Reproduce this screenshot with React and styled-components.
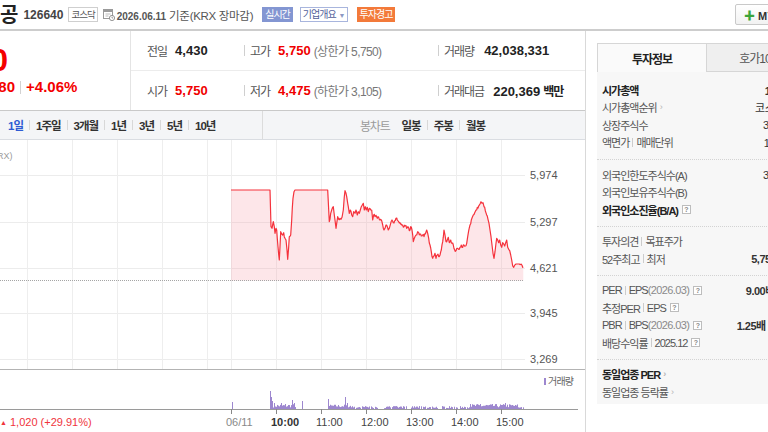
import React from "react";
import styled, { createGlobalStyle } from "styled-components";

const FONT = `"Liberation Sans", "Noto Sans CJK KR", sans-serif`;

const GlobalStyle = createGlobalStyle`
  html, body { margin: 0; padding: 0; overflow: hidden; background: #fff; }
  body { font-family: ${FONT}; color: #333; }
  * { box-sizing: border-box; }
`;

const Page = styled.div`
  width: 826px;
  height: 432px;
  display: flex;
  flex-direction: column;
`;

/* ---------- top bar ---------- */
const TopBar = styled.header`
  height: 31px;
  flex-shrink: 0;
  border-bottom: 2px solid #cdcdcd;
  display: flex;
  align-items: center;
`;
const Name = styled.h1`
  margin: 0;
  font: bold 20px ${FONT};
  color: #222;
  line-height: 1;
`;
const Code = styled.span`
  margin-left: 5px;
  font: bold 12px ${FONT};
  color: #444;
`;
const MarketTag = styled.span`
  margin-left: 5px;
  height: 15px;
  padding: 0 2px;
  border: 1px solid #cfcfcf;
  font: 9.5px/13px ${FONT};
  letter-spacing: -1px;
  color: #555;
`;
const CalIcon = styled.svg`
  margin-left: 5px;
  flex-shrink: 0;
`;
const DateText = styled.span`
  margin-left: 2px;
  font: 11.5px ${FONT};
  letter-spacing: -0.3px;
  color: #555;
  b { font-size: 10px; letter-spacing: 0; }
`;
const badgeColors = {
  live: "background:#8396d2;color:#fff;border-color:#8396d2;",
  info: "background:#fff;color:#52609a;border-color:#a8b5dd;",
  warn: "background:#f37a3a;color:#fff;border-color:#f37a3a;",
};
const Badge = styled.span`
  margin-left: ${(p) => p.$ml || 8}px;
  height: 15px;
  padding: 0 2px;
  border: 1px solid;
  font: 10px/13px ${FONT};
  letter-spacing: -1px;
  white-space: nowrap;
  ${(p) => badgeColors[p.$kind]}
  i { font-style: normal; font-size: 7px; color: #8d99c4; margin-left: 3px; }
`;
const MyButton = styled.button`
  margin-left: auto;
  margin-right: 43px;
  width: 48px;
  height: 21px;
  padding: 0 0 0 8px;
  text-align: left;
  border: 1px solid #c9c9c9;
  border-radius: 2px;
  background: linear-gradient(#ffffff, #f2f2f2);
  font: bold 11px ${FONT};
  color: #333;
  span { color: #3aa53a; margin-right: 3px; }
`;

/* ---------- body ---------- */
const Body = styled.div`
  flex: 1;
  display: flex;
  min-height: 0;
`;
const Main = styled.main`
  width: 586px;
  flex-shrink: 0;
  border-right: 1px solid #d9d9d9;
  display: flex;
  flex-direction: column;
`;
const Summary = styled.section`
  height: 80px;
  flex-shrink: 0;
  border-bottom: 1px solid #c9c9c9;
  display: flex;
`;
const PriceBlock = styled.div`
  width: 131px;
  border-right: 1px solid #e4e4e4;
  overflow: hidden;
  padding-top: 11px;
  white-space: nowrap;
`;
const Price = styled.div`
  margin-left: ${(p) => p.$shift}px;
  font: bold 32px/36px ${FONT};
  color: #f40000;
`;
const Change = styled.div`
  margin-left: ${(p) => p.$shift}px;
  display: flex;
  align-items: center;
  font: bold 15px/18px ${FONT};
  color: #f40000;
`;
const Arrow = styled.span`
  display: inline-block;
  width: 12px;
  font-size: 10px;
`;
const VBar = styled.span`
  display: inline-block;
  width: 1px;
  height: ${(p) => p.$h || 12}px;
  background: ${(p) => p.$c || "#d2d2d2"};
  margin: 0 ${(p) => p.$m ?? 5}px;
  flex-shrink: 0;
`;
const Stats = styled.div`
  flex: 1;
  display: grid;
  grid-template-columns: 113px 194px 1fr;
  grid-template-rows: 40px 1fr;
`;
const StatCell = styled.div`
  display: flex;
  align-items: center;
  padding-left: ${(p) => (p.$first ? 16 : 0)}px;
  border-bottom: ${(p) => (p.$top ? "1px solid #ececec" : "none")};
  white-space: nowrap;
`;
const StatLabel = styled.span`
  font: 12px ${FONT};
  letter-spacing: -1px;
  color: #555;
  margin-left: ${(p) => (p.$after ? 5 : 0)}px;
  margin-right: ${(p) => p.$gap || 8}px;
`;
const StatValue = styled.span`
  font: bold 13px ${FONT};
  color: ${(p) => (p.$up ? "#f00000" : "#222")};
  small { font-size: 12px; margin-left: 3px; letter-spacing: -1px; }
`;
const StatSub = styled.span`
  margin-left: 3px;
  font: 12px ${FONT};
  letter-spacing: -0.6px;
  color: #777;
`;

/* chart tabs */
const ChartTabs = styled.nav`
  height: 29px;
  flex-shrink: 0;
  background: #f4f5f7;
  border-bottom: 1px solid #dadde2;
  display: flex;
  align-items: center;
`;
const PeriodGroup = styled.div`
  width: 263px;
  height: 100%;
  border-right: 1px solid #dcdcdc;
  display: flex;
  align-items: center;
  padding-left: 8px;
`;
const PeriodTab = styled.span`
  font: bold 11.5px ${FONT};
  letter-spacing: -1px;
  color: ${(p) => (p.$active ? "#2f5bd3" : "#333")};
`;
const CandleGroup = styled.div`
  margin-left: 97px;
  display: flex;
  align-items: center;
`;
const CandleTitle = styled.span`
  font: 12px ${FONT};
  letter-spacing: -1.2px;
  color: #9a9a9a;
  margin-right: 12px;
`;

const PriceChart = styled.div`
  height: 230px;
  flex-shrink: 0;
  border-bottom: 1px solid #b3b3b3;
`;
const VolumeChart = styled.div`
  flex: 1;
  min-height: 0;
`;

/* ---------- aside ---------- */
const Aside = styled.aside`
  width: 240px;
  flex-shrink: 0;
  padding: 12px 11px 0;
`;
const Tabs = styled.div`
  display: flex;
  height: 29px;
`;
const Tab = styled.div`
  width: ${(p) => p.$w}px;
  flex-shrink: 0;
  display: flex;
  align-items: center;
  justify-content: center;
  font: ${(p) => (p.$active ? "bold" : "normal")} 12px ${FONT};
  letter-spacing: -1px;
  color: ${(p) => (p.$active ? "#222" : "#555")};
  background: ${(p) => (p.$active ? "#fafafa" : "#efefef")};
  border: 1px solid #d6d6d6;
  border-bottom: ${(p) => (p.$active ? "none" : "1px solid #d6d6d6")};
  border-left: ${(p) => (p.$active ? "1px solid #d6d6d6" : "none")};
  white-space: nowrap;
`;
const InfoBox = styled.div`
  background: #f7f7f7;
  width: 218px;
`;
const InfoGroup = styled.div`
  padding: ${(p) => p.$pt}px 0 ${(p) => p.$pb}px;
  border-top: ${(p) => (p.$first ? "none" : "1px dotted #d3d3d3")};
`;
const InfoRow = styled.div`
  height: 17.5px;
  display: flex;
  align-items: center;
  justify-content: space-between;
  padding: 0 2px 0 5px;
  white-space: nowrap;
`;
const Label = styled.span`
  display: flex;
  align-items: center;
  font: ${(p) => (p.$bold ? "bold" : "normal")} 11px ${FONT};
  letter-spacing: -1px;
  color: ${(p) => (p.$bold ? "#222" : "#555")};
`;
const Dim = styled.span`
  color: #8a8a8a;
  letter-spacing: -0.6px;
`;
const More = styled.span`
  color: #b5b5b5;
  font-size: 9px;
  margin-left: 3px;
`;
const Help = styled.span`
  display: inline-flex;
  align-items: center;
  justify-content: center;
  width: 9px;
  height: 9px;
  margin-left: 4px;
  border: 1px solid #bdbdbd;
  background: #fff;
  font: bold 7px/1 ${FONT};
  letter-spacing: 0;
  color: #888;
`;
const Value = styled.span`
  font: ${(p) => (p.$bold ? "bold" : "normal")} 11px ${FONT};
  letter-spacing: -0.5px;
  color: #333;
  margin-right: ${(p) => p.$mr || 0}px;
`;

/* ---------- chart data ---------- */
const Z = [
  [93, 90], [210, 90], [213, 200], [216, 205], [220, 185], [223, 200], [225, 220], [228, 205], [230, 210],
  [234, 260], [238, 300], [240, 260], [242, 215], [245, 222], [248, 225], [251, 218], [255, 235], [258, 240],
  [261, 270], [263, 298], [266, 260], [268, 230], [272, 225], [275, 180], [279, 115], [282, 95], [285, 90],
  [383, 90], [386, 150], [388, 185], [392, 160], [395, 150], [400, 140], [403, 165], [405, 180], [408, 205],
  [410, 190], [413, 170], [416, 178], [420, 175], [423, 178], [426, 172], [430, 150], [433, 110], [435, 92],
  [438, 100], [440, 110], [443, 130], [445, 140], [448, 160], [451, 150], [455, 165], [458, 170], [461, 155],
  [465, 160], [468, 150], [472, 165], [475, 155], [478, 160], [481, 150], [484, 140], [487, 135], [490, 130],
  [493, 150], [496, 140], [499, 150], [502, 142], [505, 155], [508, 145], [512, 150], [515, 150], [518, 180],
  [521, 165], [525, 170], [528, 166], [532, 175], [536, 172], [540, 180], [545, 182], [548, 195], [552, 210],
  [555, 205], [558, 195], [562, 200], [565, 210], [568, 205], [572, 190], [576, 180], [580, 188], [584, 182],
  [588, 175], [592, 180], [596, 185], [600, 188], [604, 192], [608, 195], [612, 200], [616, 198], [620, 205],
  [624, 200], [628, 212], [632, 200], [636, 210], [640, 245], [643, 235], [646, 228], [650, 225], [653, 215],
  [656, 218], [660, 222], [664, 228], [668, 225], [672, 230], [676, 222], [680, 210], [683, 220], [686, 235],
  [690, 255], [694, 275], [698, 295], [702, 288], [705, 280], [708, 295], [712, 285], [716, 290], [720, 285],
  [724, 270], [728, 245], [732, 210], [735, 225], [738, 245], [742, 240], [745, 232], [748, 248], [752, 240],
  [756, 250], [760, 255], [764, 270], [768, 272], [772, 265], [776, 268], [780, 262], [784, 255], [788, 262],
  [792, 255], [796, 258], [800, 250], [803, 230], [806, 212], [810, 195], [814, 180], [817, 172], [820, 165],
  [824, 158], [828, 150], [832, 142], [836, 138], [840, 132], [843, 125], [846, 130], [849, 128], [852, 140],
  [856, 152], [860, 165], [864, 178], [867, 190], [870, 210], [873, 230], [876, 255], [879, 280], [882, 295],
  [885, 275], [888, 250], [890, 235], [893, 240], [896, 248], [899, 240], [902, 255], [905, 262], [908, 248],
  [911, 252], [914, 258], [917, 248], [920, 240], [923, 262], [926, 268], [929, 272], [932, 285], [935, 300],
  [938, 318], [941, 322], [944, 315], [948, 312], [952, 312], [958, 312], [962, 313], [966, 316], [970, 322],
];

const linePoints = (() => {
  const base = Z.map(([zx, zy]) => [200 + zx / 3, 160 + zy / 3]);
  const out = [base[0]];
  for (let i = 1; i < base.length; i++) {
    const [x0, y0] = base[i - 1];
    const [x1, y1] = base[i];
    if (y0 !== y1 && x1 - x0 > 1.2) {
      const n = Math.sin(i * 12.9898) * 43758.5453;
      const j = (n - Math.floor(n) - 0.5) * 3.2;
      out.push([(x0 + x1) / 2, (y0 + y1) / 2 + j]);
    }
    out.push(base[i]);
  }
  return out;
})();
const lineD = "M" + linePoints.map(([x, y]) => `${x.toFixed(1)},${y.toFixed(1)}`).join("L");
const lastX = linePoints[linePoints.length - 1][0];
const fillD = `${lineD}L${lastX.toFixed(1)},280.5L231,280.5Z`;

const Y_GRID = [
  [175, "5,974"],
  [222, "5,297"],
  [268, "4,621"],
  [313, "3,945"],
  [359, "3,269"],
];
const X_GRID = [27, 72, 117, 162, 207, 231, 276, 321, 366, 411, 456, 501];
const TICKS = [
  [231, "06/11", "#888", "normal"],
  [276, "10:00", "#333", "bold"],
  [321, "11:00", "#444", "normal"],
  [366, "12:00", "#444", "normal"],
  [411, "13:00", "#444", "normal"],
  [456, "14:00", "#444", "normal"],
  [501, "15:00", "#444", "normal"],
];

const volBars = (() => {
  let s = 7;
  const r = () => {
    s = (s * 16807) % 2147483647;
    return s / 2147483647;
  };
  const spikes = {
    232: 7, 270: 18, 271: 12, 272: 8, 274: 6, 281: 6, 285: 5, 292: 9, 294: 6, 302: 8,
    328: 10, 345: 12, 347: 6, 470: 5, 480: 5, 492: 5, 505: 6, 515: 4,
  };
  const bars = [];
  for (let x = 231; x <= 523; x++) {
    let h = 0;
    if (x >= 273 && x <= 295) h = 1.5 + r() * 3.5;
    else if (x >= 329 && x <= 350) h = 1.5 + r() * 3;
    else if (x > 350 && x <= 469) h = r() < 0.75 ? 0.8 + r() * 2.2 : 0;
    else if (x >= 470 && x <= 517) h = 1.5 + r() * 3.5;
    else if (x > 517 && x <= 523) h = r() < 0.5 ? 1 + r() : 0;
    if (spikes[x]) h = spikes[x];
    if (h > 0) bars.push([x, h]);
  }
  return bars;
})();

const SVG_FONT = "Liberation Sans, Noto Sans CJK KR, sans-serif";

function PriceSvg() {
  return (
    <svg width="585" height="229" viewBox="0 140 585 229" style={{ display: "block" }}>
      {Y_GRID.map(([y]) => (
        <line key={y} x1="0" x2="525" y1={y + 0.5} y2={y + 0.5} stroke="#ececec" />
      ))}
      {X_GRID.map((x) => (
        <line key={x} x1={x + 0.5} x2={x + 0.5} y1="140" y2="369" stroke="#eeeeee" />
      ))}
      <path d={fillD} fill="#f7a0aa" fillOpacity="0.26" />
      <line x1="0" x2={lastX} y1="280.5" y2="280.5" stroke="#a5a5a5" strokeDasharray="1 1" />
      <path d={lineD} fill="none" stroke="#f5323c" strokeWidth="1.2" strokeLinejoin="round" />
      {Y_GRID.map(([y, t]) => (
        <text key={t} x="530" y={y + 4} fontSize="11" fill="#555" fontFamily={SVG_FONT}>
          {t}
        </text>
      ))}
      <text x="-12" y="159" fontSize="9" fill="#9a9a9a" fontFamily={SVG_FONT}>
        (KRX)
      </text>
    </svg>
  );
}

function VolumeSvg() {
  return (
    <svg width="585" height="62" viewBox="0 370 585 62" style={{ display: "block" }}>
      {volBars.map(([x, h]) => (
        <rect key={x} x={x} y={409 - h} width="1" height={h} fill="#9d87cf" />
      ))}
      <line x1="0" x2="578" y1="409.5" y2="409.5" stroke="#9a9a9a" />
      {TICKS.map(([x]) => (
        <line key={x} x1={x + 0.5} x2={x + 0.5} y1="409" y2="414" stroke="#888" />
      ))}
      {TICKS.map(([x, t, c, w]) => (
        <text key={t} x={x - 5} y="426" fontSize="11" fill={c} fontWeight={w} fontFamily={SVG_FONT}>
          {t}
        </text>
      ))}
      <rect x="544" y="378" width="2" height="7" fill="#9d87cf" />
      <text x="548" y="385" fontSize="10" fill="#666" letterSpacing="-0.8" fontFamily={SVG_FONT}>
        거래량
      </text>
      <text x="0" y="426" fontSize="11" fill="#f0343c" fontFamily={SVG_FONT}>
        <tspan fontSize="7" dy="-1">▲</tspan>
        <tspan dy="1"> 1,020 (+29.91%)</tspan>
      </text>
    </svg>
  );
}

const periods = ["1일", "1주일", "3개월", "1년", "3년", "5년", "10년"];

export default function App() {
  return (
    <Page>
      <GlobalStyle />
      <TopBar>
        <Name>공</Name>
        <Code>126640</Code>
        <MarketTag>코스닥</MarketTag>
        <CalIcon width="12" height="13" viewBox="0 0 12 13">
          <rect x="0.5" y="1.5" width="9" height="9" fill="#fff" stroke="#9a9a9a" />
          <rect x="0.5" y="1.5" width="9" height="2.5" fill="#9a9a9a" />
          <line x1="2.5" y1="6" x2="7.5" y2="6" stroke="#bbb" />
          <line x1="2.5" y1="8" x2="5.5" y2="8" stroke="#bbb" />
          <circle cx="9" cy="10" r="2.6" fill="#fff" stroke="#8a8a8a" strokeWidth="0.9" />
          <path d="M9 8.7V10h1.1" stroke="#8a8a8a" strokeWidth="0.8" fill="none" />
        </CalIcon>
        <DateText>
          <b>2026.06.11</b> 기준(KRX 장마감)
        </DateText>
        <Badge $kind="live" $ml={9}>실시간</Badge>
        <Badge $kind="info" $ml={7}>
          기업개요<i>▼</i>
        </Badge>
        <Badge $kind="warn" $ml={9}>투자경고</Badge>
        <MyButton>
          <span>✚</span>MY
        </MyButton>
      </TopBar>

      <Body>
        <Main>
          <Summary>
            <PriceBlock>
              <Price $shift={-72}>4,610</Price>
              <Change $shift={-22}>
                <Arrow>▲</Arrow>180
                <VBar $h={13} $m={5} />
                +4.06%
              </Change>
            </PriceBlock>
            <Stats>
              <StatCell $first $top>
                <StatLabel>전일</StatLabel>
                <StatValue>4,430</StatValue>
              </StatCell>
              <StatCell $top>
                <VBar $h={11} $m={0} $c="#cfcfcf" />
                <StatLabel $after>고가</StatLabel>
                <StatValue $up>5,750</StatValue>
                <StatSub>(상한가 5,750)</StatSub>
              </StatCell>
              <StatCell $top>
                <VBar $h={11} $m={0} $c="#cfcfcf" />
                <StatLabel $after $gap={10}>
                  거래량
                </StatLabel>
                <StatValue>42,038,331</StatValue>
              </StatCell>
              <StatCell $first>
                <StatLabel>시가</StatLabel>
                <StatValue $up>5,750</StatValue>
              </StatCell>
              <StatCell>
                <VBar $h={11} $m={0} $c="#cfcfcf" />
                <StatLabel $after>저가</StatLabel>
                <StatValue $up>4,475</StatValue>
                <StatSub>(하한가 3,105)</StatSub>
              </StatCell>
              <StatCell>
                <VBar $h={11} $m={0} $c="#cfcfcf" />
                <StatLabel $after $gap={9}>
                  거래대금
                </StatLabel>
                <StatValue>
                  220,369<small>백만</small>
                </StatValue>
              </StatCell>
            </Stats>
          </Summary>

          <ChartTabs>
            <PeriodGroup>
              {periods.map((p, i) => (
                <React.Fragment key={p}>
                  {i > 0 && <VBar $h={10} $m={6} $c="#d8d8d8" />}
                  <PeriodTab $active={i === 0}>{p}</PeriodTab>
                </React.Fragment>
              ))}
            </PeriodGroup>
            <CandleGroup>
              <CandleTitle>봉차트</CandleTitle>
              <PeriodTab>일봉</PeriodTab>
              <VBar $h={10} $m={6} $c="#d8d8d8" />
              <PeriodTab>주봉</PeriodTab>
              <VBar $h={10} $m={6} $c="#d8d8d8" />
              <PeriodTab>월봉</PeriodTab>
            </CandleGroup>
          </ChartTabs>

          <PriceChart>
            <PriceSvg />
          </PriceChart>
          <VolumeChart>
            <VolumeSvg />
          </VolumeChart>
        </Main>

        <Aside>
          <Tabs>
            <Tab $w={110} $active>
              투자정보
            </Tab>
            <Tab $w={117}>호가10단계</Tab>
          </Tabs>
          <InfoBox>
            <InfoGroup $first $pt={9} $pb={8}>
              <InfoRow>
                <Label $bold>시가총액</Label>
                <Value $bold $mr={4}>1,652억원</Value>
              </InfoRow>
              <InfoRow>
                <Label>
                  시가총액순위<More>›</More>
                </Label>
                <Value>코스닥 248위</Value>
              </InfoRow>
              <InfoRow>
                <Label>상장주식수</Label>
                <Value>35,992,125</Value>
              </InfoRow>
              <InfoRow>
                <Label>
                  액면가<VBar $h={9} $m={3} $c="#cccccc" />매매단위
                </Label>
                <Value>100원 | 1주</Value>
              </InfoRow>
            </InfoGroup>
            <InfoGroup $pt={6} $pb={7}>
              <InfoRow>
                <Label>외국인한도주식수(A)</Label>
                <Value>35,992,125</Value>
              </InfoRow>
              <InfoRow>
                <Label>외국인보유주식수(B)</Label>
                <Value>512,393</Value>
              </InfoRow>
              <InfoRow>
                <Label $bold>
                  외국인소진율(B/A)<Help>?</Help>
                </Label>
                <Value>1.42%</Value>
              </InfoRow>
            </InfoGroup>
            <InfoGroup $pt={6} $pb={7}>
              <InfoRow>
                <Label>
                  투자의견<VBar $h={9} $m={3} $c="#cccccc" />목표주가
                </Label>
                <Value>N/A</Value>
              </InfoRow>
              <InfoRow>
                <Label>
                  52주최고<VBar $h={9} $m={3} $c="#cccccc" />최저
                </Label>
                <Value $bold $mr={4}>5,750 | 2,655</Value>
              </InfoRow>
            </InfoGroup>
            <InfoGroup $pt={6} $pb={7}>
              <InfoRow>
                <Label>
                  PER<VBar $h={9} $m={3} $c="#cccccc" />EPS<Dim>(2026.03)</Dim>
                  <Help>?</Help>
                </Label>
                <Value $bold $mr={4}>9.00배 | 512원</Value>
              </InfoRow>
              <InfoRow>
                <Label>
                  추정PER<VBar $h={9} $m={3} $c="#cccccc" />EPS<Help>?</Help>
                </Label>
                <Value>N/A</Value>
              </InfoRow>
              <InfoRow>
                <Label>
                  PBR<VBar $h={9} $m={3} $c="#cccccc" />BPS <Dim>(2026.03)</Dim>
                  <Help>?</Help>
                </Label>
                <Value $bold $mr={5}>1.25배 | 3,690원</Value>
              </InfoRow>
              <InfoRow>
                <Label>
                  배당수익률<VBar $h={9} $m={3} $c="#cccccc" />2025.12<Help>?</Help>
                </Label>
                <Value>N/A</Value>
              </InfoRow>
            </InfoGroup>
            <InfoGroup $pt={6} $pb={3}>
              <InfoRow>
                <Label $bold>
                  동일업종 PER<More>›</More>
                </Label>
                <Value>12.34배</Value>
              </InfoRow>
              <InfoRow>
                <Label>
                  동일업종 등락률<More>›</More>
                </Label>
                <Value>+1.23%</Value>
              </InfoRow>
            </InfoGroup>
          </InfoBox>
        </Aside>
      </Body>
    </Page>
  );
}
